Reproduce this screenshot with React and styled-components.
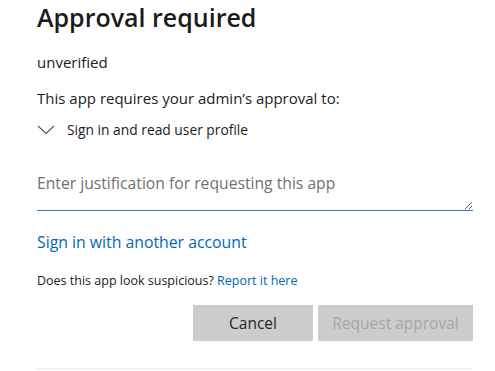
import React from "react";
import styled, { createGlobalStyle } from "styled-components";

const GlobalStyle = createGlobalStyle`
    body {
        margin: 0;
        background: #ffffff;
        font-family: "Open Sans", "Noto Sans", sans-serif;
        color: #1b1b1b;
    }
`;

function Chevron() {
    return (
        <svg width="18" height="10" viewBox="0 0 18 10" fill="none">
            <path d="M1 1 L9 8.5 L17 1" stroke="#555" strokeWidth="1.1" />
        </svg>
    );
}

export default function App() {
    return (
        <>
            <GlobalStyle />
            <Container>
                <Title>Approval required</Title>
                <Subtle>unverified</Subtle>
                <Intro>This app requires your admin’s approval to:</Intro>
                <Permission>
                    <Chevron />
                    <span>Sign in and read user profile</span>
                </Permission>
                <Justification placeholder="Enter justification for requesting this app" />
                <AccountLink href="#">Sign in with another account</AccountLink>
                <Suspicious>
                    Does this app look suspicious? <a href="#">Report it here</a>
                </Suspicious>
                <Buttons>
                    <Button>Cancel</Button>
                    <Button disabled wide>Request approval</Button>
                </Buttons>
                <Divider />
            </Container>
        </>
    );
}

// ::::::::::Styled-Components::::::::::
const Container = styled.div`
    width: 436px;
    padding: 0 0 0 37px;
    display: flex;
    flex-direction: column;
`
const Title = styled.h1`
    margin: 0;
    padding-top: 1px;
    font-size: 25px;
    font-weight: 600;
    line-height: 32px;
    color: #1b1b1b;
`
const Subtle = styled.p`
    margin: 19px 0 0 0;
    font-size: 15px;
    line-height: 20px;
    color: #1b1b1b;
`
const Intro = styled.p`
    margin: 16px 0 0 0;
    font-size: 15px;
    line-height: 20px;
`
const Permission = styled.div`
    margin-top: 13px;
    display: flex;
    align-items: center;
    gap: 12px;
    font-size: 13.8px;
    line-height: 18px;
    color: #1b1b1b;
`
const Justification = styled.textarea`
    margin-top: 33px;
    width: 436px;
    height: 39px;
    box-sizing: border-box;
    border: none;
    border-bottom: 1px solid #2f7fc6;
    outline: none;
    padding: 0;
    font-family: "Open Sans", sans-serif;
    font-size: 15.7px;
    line-height: 22px;
    color: #1b1b1b;
    &::placeholder {
        color: #707070;
    }
`
const AccountLink = styled.a`
    margin-top: 20px;
    font-size: 15.8px;
    line-height: 22px;
    color: #0067b8;
    text-decoration: none;
    align-self: flex-start;
`
const Suspicious = styled.p`
    margin: 20px 0 0 0;
    font-size: 12.5px;
    line-height: 16px;
    color: #1b1b1b;
    a {
        color: #0067b8;
        text-decoration: none;
    }
`
const Buttons = styled.div`
    margin-top: 16px;
    display: flex;
    justify-content: flex-end;
    gap: 5px;
`
const Button = styled.button`
    width: ${(p) => (p.wide ? "155px" : "120px")};
    height: 36px;
    border: none;
    background: #cccccc;
    font-family: "Open Sans", sans-serif;
    font-size: 15.5px;
    color: #262626;
    padding: 0;
    &:disabled {
        color: #a6a6a6;
    }
`
const Divider = styled.div`
    margin-top: 27px;
    height: 2px;
    background: #f2f2f2;
`
